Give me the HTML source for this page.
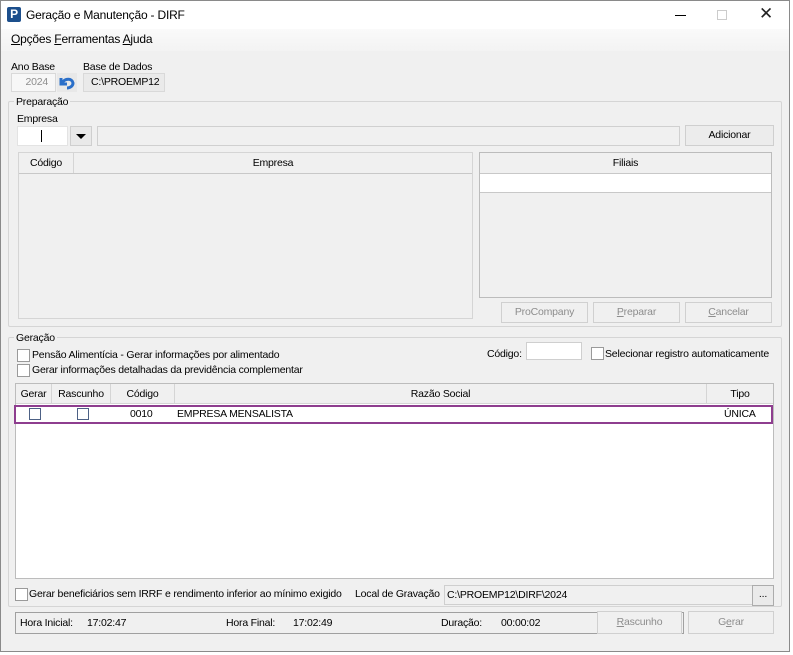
<!DOCTYPE html>
<html><head><meta charset="utf-8"><style>
*{margin:0;padding:0;box-sizing:border-box}
body{width:793px;height:655px;background:#fff;font-family:"Liberation Sans",sans-serif;font-size:10.5px;letter-spacing:-0.2px;line-height:16px;color:#000;position:relative;overflow:hidden}
.a{position:absolute;white-space:nowrap}
.win{left:0;top:0;width:790px;height:652px;border:1px solid #8a8a8a;background:#f0f0f0}
.grp{border:1px solid #d5d5d5;border-radius:2px}
.gl{background:#f0f0f0;padding:0 2px;color:#000}
.in{background:#fff;border:1px solid #abadb3}
.ro{background:#f0f0f0;border:1px solid #d9d9d9}
.btn{background:#e5e5e5;border:1px solid #acacac;text-align:center;line-height:19px}
.dis{color:#8d8d8d;background:#f0f0f0;border-color:#d0d0d0}
.cb{width:13px;height:13px;border:1px solid #9a9a9a;background:#fff}
.cbb{width:12px;height:12px;border:1px solid #4d6185;background:#fff}
.hd{border-right:1px solid #d5d5d5;text-align:center;line-height:20px;height:20px}
u{text-decoration:underline}
</style></head><body>
<div class="a win"></div>
<!-- title bar -->
<div class="a" style="left:1px;top:1px;width:788px;height:28px;background:#fff"></div>
<div class="a" style="left:7px;top:7px;width:14px;height:15px;background:#1c4f8c;border-radius:2px;color:#fff;font-weight:bold;font-size:12px;line-height:15px;text-align:center">P</div>
<div class="a" style="left:26px;top:7px;font-size:12px">Geração e Manutenção - DIRF</div>
<div class="a" style="left:675px;top:15px;width:11px;height:1px;background:#000"></div>
<div class="a" style="left:717px;top:10px;width:10px;height:10px;border:1px solid #ccc"></div>
<div class="a" style="left:759px;top:4px;font-size:17px;line-height:20px;color:#222">✕</div>
<!-- menu -->
<div class="a" style="left:1px;top:29px;width:788px;height:22px;background:linear-gradient(#fafafa,#f3f3f3)"></div>
<div class="a" style="left:11px;top:31px;font-size:12px"><u>O</u>pções <u>F</u>erramentas <u>A</u>juda</div>
<!-- ano base -->
<div class="a" style="left:11px;top:59px">Ano Base</div>
<div class="a ro" style="left:11px;top:73px;width:45px;height:19px;background:#f7f7f7;color:#8d8d8d;text-align:right;padding-right:7px;line-height:17px">2024</div>
<div class="a" style="left:57px;top:73px;width:20px;height:19px;background:#e8e8e8"></div>
<svg class="a" style="left:58px;top:75px" width="18" height="15" viewBox="0 0 18 15"><path d="M3 3 L3 9 L9 9" fill="none" stroke="#2a6fc9" stroke-width="3"/><path d="M4 8 C7 3 14 3 15 8 C15 11 12 13 9 13" fill="none" stroke="#2a6fc9" stroke-width="3"/></svg>
<div class="a" style="left:83px;top:59px">Base de Dados</div>
<div class="a ro" style="left:83px;top:73px;width:82px;height:19px;background:#eaeaea;line-height:17px;padding-left:7px">C:\PROEMP12</div>
<!-- Preparação -->
<div class="a grp" style="left:8px;top:101px;width:774px;height:226px"></div>
<div class="a gl" style="left:14px;top:94px">Preparação</div>
<div class="a" style="left:17px;top:111px">Empresa</div>
<div class="a in" style="left:17px;top:126px;width:51px;height:20px;border-color:#e3e3e3"></div>
<div class="a" style="left:41px;top:130px;width:1px;height:12px;background:#000"></div>
<div class="a btn" style="left:70px;top:126px;width:22px;height:20px;background:#e9e9e9;border-color:#cfcfcf"></div>
<div class="a" style="left:76px;top:134px;width:0;height:0;border-left:5px solid transparent;border-right:5px solid transparent;border-top:5px solid #000"></div>
<div class="a ro" style="left:97px;top:126px;width:583px;height:20px;border-color:#d0d0d0"></div>
<div class="a btn" style="left:685px;top:125px;width:89px;height:21px;background:#ececec;border-color:#cfcfcf">Adicionar</div>
<!-- left grid -->
<div class="a" style="left:18px;top:152px;width:455px;height:167px;border:1px solid #d5d5d5"></div>
<div class="a" style="left:19px;top:153px;width:453px;height:21px;border-bottom:1px solid #c8c8c8"></div>
<div class="a hd" style="left:19px;top:153px;width:55px;line-height:21px">Código</div>
<div class="a" style="left:74px;top:153px;width:398px;text-align:center;line-height:21px">Empresa</div>
<!-- right grid -->
<div class="a" style="left:479px;top:152px;width:293px;height:146px;border:1px solid #bcbcbc"></div>
<div class="a" style="left:480px;top:153px;width:291px;height:21px;border-bottom:1px solid #c8c8c8;text-align:center;line-height:21px">Filiais</div>
<div class="a" style="left:480px;top:174px;width:291px;height:19px;background:#fff;border-bottom:1px solid #c8c8c8"></div>
<div class="a btn dis" style="left:501px;top:302px;width:87px;height:21px">ProCompany</div>
<div class="a btn dis" style="left:593px;top:302px;width:87px;height:21px"><u>P</u>reparar</div>
<div class="a btn dis" style="left:685px;top:302px;width:87px;height:21px"><u>C</u>ancelar</div>
<!-- Geração -->
<div class="a grp" style="left:8px;top:337px;width:774px;height:270px"></div>
<div class="a gl" style="left:14px;top:330px">Geração</div>
<div class="a cb" style="left:17px;top:349px"></div>
<div class="a" style="left:32px;top:347px">Pensão Alimentícia - Gerar informações por alimentado</div>
<div class="a cb" style="left:17px;top:364px"></div>
<div class="a" style="left:32px;top:362px">Gerar informações detalhadas da previdência complementar</div>
<div class="a" style="left:487px;top:346px">Código:</div>
<div class="a in" style="left:526px;top:342px;width:56px;height:18px;border-color:#cfcfcf"></div>
<div class="a cb" style="left:591px;top:347px"></div>
<div class="a" style="left:605px;top:346px">Selecionar registro automaticamente</div>
<!-- main grid -->
<div class="a" style="left:15px;top:383px;width:759px;height:196px;border:1px solid #bcbcbc;background:#fff"></div>
<div class="a" style="left:16px;top:384px;width:757px;height:20px;background:#f0f0f0;border-bottom:1px solid #d5d5d5"></div>
<div class="a hd" style="left:16px;top:384px;width:36px">Gerar</div>
<div class="a hd" style="left:52px;top:384px;width:59px">Rascunho</div>
<div class="a hd" style="left:111px;top:384px;width:64px">Código</div>
<div class="a hd" style="left:175px;top:384px;width:532px">Razão Social</div>
<div class="a" style="left:707px;top:384px;width:66px;text-align:center;line-height:20px">Tipo</div>
<div class="a" style="left:14px;top:405px;width:759px;height:19px;border:2px solid #8e3e8f"></div>
<div class="a cbb" style="left:29px;top:408px"></div>
<div class="a cbb" style="left:77px;top:408px"></div>
<div class="a" style="left:130px;top:406px">0010</div>
<div class="a" style="left:177px;top:406px">EMPRESA MENSALISTA</div>
<div class="a" style="left:724px;top:406px">ÚNICA</div>
<!-- bottom -->
<div class="a cb" style="left:15px;top:588px"></div>
<div class="a" style="left:29px;top:586px">Gerar beneficiários sem IRRF e rendimento inferior ao mínimo exigido</div>
<div class="a" style="left:355px;top:586px">Local de Gravação</div>
<div class="a ro" style="left:444px;top:585px;width:309px;height:20px;border-color:#cfcfcf;line-height:18px;padding-left:2px">C:\PROEMP12\DIRF\2024</div>
<div class="a btn" style="left:752px;top:585px;width:22px;height:21px;background:#eaeaea;line-height:17px">...</div>
<div class="a" style="left:15px;top:612px;width:669px;height:22px;border:1px solid #a0a0a0"></div>
<div class="a" style="left:20px;top:615px">Hora Inicial:</div>
<div class="a" style="left:87px;top:615px">17:02:47</div>
<div class="a" style="left:226px;top:615px">Hora Final:</div>
<div class="a" style="left:293px;top:615px">17:02:49</div>
<div class="a" style="left:441px;top:615px">Duração:</div>
<div class="a" style="left:501px;top:615px">00:00:02</div>
<div class="a btn dis" style="left:597px;top:611px;width:85px;height:23px;line-height:21px"><u>R</u>ascunho</div>
<div class="a btn dis" style="left:688px;top:611px;width:86px;height:23px;line-height:21px">G<u>e</u>rar</div>
</body></html>
